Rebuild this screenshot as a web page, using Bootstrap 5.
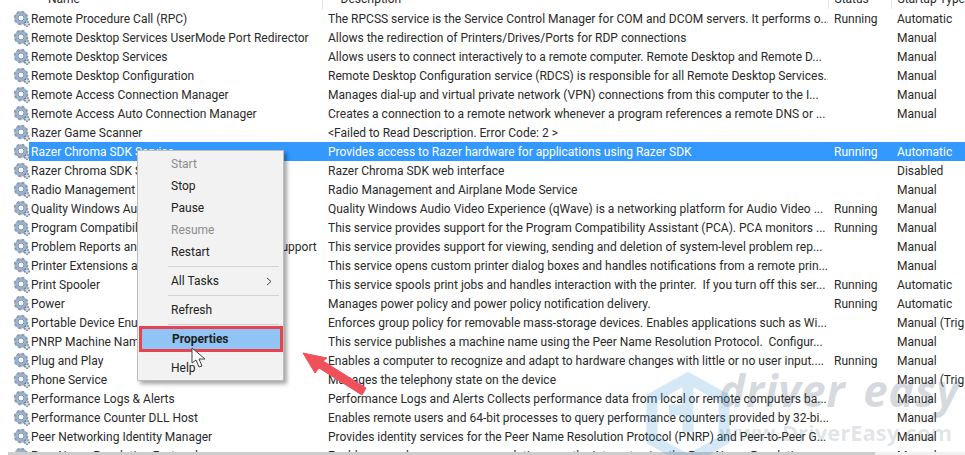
<!DOCTYPE html>
<html lang="en">
  <head>
    <meta charset="UTF-8">
    <meta name="viewport" content="width=device-width, initial-scale=1.0">
    <title>Services</title>
    <link href="https://cdn.jsdelivr.net/npm/bootstrap@5.3.0/dist/css/bootstrap.min.css" rel="stylesheet">
    <style>
      html, body {
        height: 455px;
        overflow: hidden;
        background: #fff;
      }
      body {
        position: relative;
        font-family: Roboto, "Noto Sans", sans-serif;
        font-size: 12px;
        color: #2a2a2a;
      }
      .svc-wrap {
        height: 452px;
        overflow: hidden;
      }
      .svc-table {
        table-layout: fixed;
        width: 965px;
        margin-top: -11px;
        --bs-table-color: #2a2a2a;
      }
      .svc-table th, .svc-table td {
        height: 19px;
        padding: 0 0 0 6px;
        line-height: 18px;
        font-size: 12px;
        font-weight: 400;
        white-space: pre;
        overflow: hidden;
        vertical-align: middle;
      }
      .svc-table th {
        height: 20px;
        border-right: 1px solid #e5e5e5;
      }
      .svc-table th:last-child { border-right: 0; }
      .svc-table th:nth-child(2) { padding-left: 18px; }
      .svc-table td.svc-name {
        padding-left: 13px;
      }
      .svc-name-in {
        display: flex;
        align-items: center;
        height: 19px;
      }
      .svc-name-in svg {
        flex: none;
        width: 18px;
        height: 18px;
      }
      .svc-on td {
        --bs-table-bg: transparent;
        background: #3399ff;
        color: #fff;
      }
      .svc-on td.svc-name {
        background: linear-gradient(90deg, #fff 29px, #3399ff 29px);
      }
      .svc-scroll {
        height: 3px;
        background: linear-gradient(90deg, #fff 8px, #cdcdcd 8px, #cdcdcd 875px, #f0f0f0 875px);
      }
      .svc-menu {
        position: absolute;
        left: 137px;
        top: 150px;
        width: 147px;
        height: 231px;
        min-width: 0;
        padding: 2px 0 0;
        background: #f2f2f2;
        border: 1px solid #bdbdbd;
        border-radius: 0;
        box-shadow: 3px 3px 4px rgba(0, 0, 0, .35);
        font-size: 12px;
      }
      .svc-menu .dropdown-item {
        height: 22px;
        line-height: 23px;
        padding: 0 0 0 33px;
        position: relative;
        color: #222;
      }
      .svc-menu .dropdown-item.disabled { color: #8c8c8c; }
      .svc-menu .dropdown-divider {
        margin: 3px 4px 3px 30px;
        border-color: #d2d2d2;
        opacity: 1;
      }
      .svc-menu .svc-tail {
        position: absolute;
        right: 11px;
        top: 7px;
      }
      .svc-menu .svc-pick {
        width: 144px;
        height: 26px;
        margin: -2px 0 5px 1px;
        padding-left: 30px;
        line-height: 20px;
        background: #90c4f5;
        border: 3px solid #e8434f;
        font-weight: 700;
        color: #222;
      }
      .svc-over {
        position: absolute;
        pointer-events: none;
      }
      .svc-arrow { left: 295px; top: 345px; }
      .svc-cursor { left: 190px; top: 346px; z-index: 1001; }
      .svc-logo { left: 645px; top: 372px; opacity: .2; }
      .svc-mark {
        left: 719px;
        top: 362px;
        font-family: "Open Sans", sans-serif;
        font-style: italic;
        font-weight: 700;
        font-size: 44px;
        line-height: 56px;
        letter-spacing: .5px;
        word-spacing: 6px;
        white-space: pre;
        color: rgba(70, 90, 110, .22);
      }
      .svc-url {
        left: 719px;
        top: 419px;
        font-family: "Open Sans", sans-serif;
        font-weight: 700;
        font-size: 22px;
        line-height: 26px;
        white-space: pre;
        color: rgba(70, 90, 110, .16);
      }
    </style>
  </head>
  <body>
    <svg width="0" height="0" class="d-block">
      <defs>
        <symbol id="gear" viewBox="0 0 18 18">
          <circle cx="8" cy="8" r="5" fill="none" stroke="#9db1ca" stroke-width="3.4"/>
          <circle cx="8" cy="8" r="6.3" fill="none" stroke="#8b9bb0" stroke-width="2" stroke-dasharray="2.4 2.55"/>
          <circle cx="8" cy="8" r="3" fill="#f4f8fc" stroke="#5f7896" stroke-width=".8"/>
          <circle cx="14" cy="14" r="2.2" fill="#d5dde7" stroke="#66788f" stroke-width="1.4" stroke-dasharray="1.4 1"/>
        </symbol>
      </defs>
    </svg>

    <div class="svc-wrap">
      <table class="table table-borderless mb-0 svc-table">
        <colgroup>
          <col style="width: 322px">
          <col style="width: 506px">
          <col style="width: 63px">
          <col style="width: 74px">
        </colgroup>
        <thead>
          <tr><th class="ps-5">Name</th><th>Description</th><th>Status</th><th>Startup Type</th></tr>
        </thead>
        <tbody>
          <tr><td class="svc-name"><div class="svc-name-in"><svg><use href="#gear"/></svg><span>Remote Procedure Call (RPC)</span></div></td><td>The RPCSS service is the Service Control Manager for COM and DCOM servers. It performs o...</td><td>Running</td><td>Automatic</td></tr>
          <tr><td class="svc-name"><div class="svc-name-in"><svg><use href="#gear"/></svg><span>Remote Desktop Services UserMode Port Redirector</span></div></td><td>Allows the redirection of Printers/Drives/Ports for RDP connections</td><td></td><td>Manual</td></tr>
          <tr><td class="svc-name"><div class="svc-name-in"><svg><use href="#gear"/></svg><span>Remote Desktop Services</span></div></td><td>Allows users to connect interactively to a remote computer. Remote Desktop and Remote D...</td><td></td><td>Manual</td></tr>
          <tr><td class="svc-name"><div class="svc-name-in"><svg><use href="#gear"/></svg><span>Remote Desktop Configuration</span></div></td><td>Remote Desktop Configuration service (RDCS) is responsible for all Remote Desktop Services...</td><td></td><td>Manual</td></tr>
          <tr><td class="svc-name"><div class="svc-name-in"><svg><use href="#gear"/></svg><span>Remote Access Connection Manager</span></div></td><td>Manages dial-up and virtual private network (VPN) connections from this computer to the I...</td><td></td><td>Manual</td></tr>
          <tr><td class="svc-name"><div class="svc-name-in"><svg><use href="#gear"/></svg><span>Remote Access Auto Connection Manager</span></div></td><td>Creates a connection to a remote network whenever a program references a remote DNS or ...</td><td></td><td>Manual</td></tr>
          <tr><td class="svc-name"><div class="svc-name-in"><svg><use href="#gear"/></svg><span>Razer Game Scanner</span></div></td><td>&lt;Failed to Read Description. Error Code: 2 &gt;</td><td></td><td></td></tr>
          <tr class="svc-on"><td class="svc-name"><div class="svc-name-in"><svg><use href="#gear"/></svg><span>Razer Chroma SDK Service</span></div></td><td>Provides access to Razer hardware for applications using Razer SDK</td><td>Running</td><td>Automatic</td></tr>
          <tr><td class="svc-name"><div class="svc-name-in"><svg><use href="#gear"/></svg><span>Razer Chroma SDK Server</span></div></td><td>Razer Chroma SDK web interface</td><td></td><td>Disabled</td></tr>
          <tr><td class="svc-name"><div class="svc-name-in"><svg><use href="#gear"/></svg><span>Radio Management Service</span></div></td><td>Radio Management and Airplane Mode Service</td><td></td><td>Manual</td></tr>
          <tr><td class="svc-name"><div class="svc-name-in"><svg><use href="#gear"/></svg><span>Quality Windows Audio Video Experience</span></div></td><td>Quality Windows Audio Video Experience (qWave) is a networking platform for Audio Video ...</td><td>Running</td><td>Manual</td></tr>
          <tr><td class="svc-name"><div class="svc-name-in"><svg><use href="#gear"/></svg><span>Program Compatibility Assistant Service</span></div></td><td>This service provides support for the Program Compatibility Assistant (PCA). PCA monitors ...</td><td>Running</td><td>Manual</td></tr>
          <tr><td class="svc-name"><div class="svc-name-in"><svg><use href="#gear"/></svg><span>Problem Reports and Solutions Control Panel Support</span></div></td><td>This service provides support for viewing, sending and deletion of system-level problem rep...</td><td></td><td>Manual</td></tr>
          <tr><td class="svc-name"><div class="svc-name-in"><svg><use href="#gear"/></svg><span>Printer Extensions and Notifications</span></div></td><td>This service opens custom printer dialog boxes and handles notifications from a remote prin...</td><td></td><td>Manual</td></tr>
          <tr><td class="svc-name"><div class="svc-name-in"><svg><use href="#gear"/></svg><span>Print Spooler</span></div></td><td>This service spools print jobs and handles interaction with the printer.  If you turn off this ser...</td><td>Running</td><td>Automatic</td></tr>
          <tr><td class="svc-name"><div class="svc-name-in"><svg><use href="#gear"/></svg><span>Power</span></div></td><td>Manages power policy and power policy notification delivery.</td><td>Running</td><td>Automatic</td></tr>
          <tr><td class="svc-name"><div class="svc-name-in"><svg><use href="#gear"/></svg><span>Portable Device Enumerator Service</span></div></td><td>Enforces group policy for removable mass-storage devices. Enables applications such as Wi...</td><td></td><td>Manual (Trig</td></tr>
          <tr><td class="svc-name"><div class="svc-name-in"><svg><use href="#gear"/></svg><span>PNRP Machine Name Publication Service</span></div></td><td>This service publishes a machine name using the Peer Name Resolution Protocol.  Configur...</td><td></td><td>Manual</td></tr>
          <tr><td class="svc-name"><div class="svc-name-in"><svg><use href="#gear"/></svg><span>Plug and Play</span></div></td><td>Enables a computer to recognize and adapt to hardware changes with little or no user input....</td><td>Running</td><td>Manual</td></tr>
          <tr><td class="svc-name"><div class="svc-name-in"><svg><use href="#gear"/></svg><span>Phone Service</span></div></td><td>Manages the telephony state on the device</td><td></td><td>Manual (Trig</td></tr>
          <tr><td class="svc-name"><div class="svc-name-in"><svg><use href="#gear"/></svg><span>Performance Logs &amp; Alerts</span></div></td><td>Performance Logs and Alerts Collects performance data from local or remote computers ba...</td><td></td><td>Manual</td></tr>
          <tr><td class="svc-name"><div class="svc-name-in"><svg><use href="#gear"/></svg><span>Performance Counter DLL Host</span></div></td><td>Enables remote users and 64-bit processes to query performance counters provided by 32-bi...</td><td></td><td>Manual</td></tr>
          <tr><td class="svc-name"><div class="svc-name-in"><svg><use href="#gear"/></svg><span>Peer Networking Identity Manager</span></div></td><td>Provides identity services for the Peer Name Resolution Protocol (PNRP) and Peer-to-Peer G...</td><td></td><td>Manual</td></tr>
          <tr><td class="svc-name"><div class="svc-name-in"><svg><use href="#gear"/></svg><span>Peer Name Resolution Protocol</span></div></td><td>Enables serverless peer name resolution over the Internet using the Peer Name Resolution...</td><td></td><td>Manual</td></tr>
        </tbody>
      </table>
    </div>
    <div class="svc-scroll"></div>

    <div class="dropdown-menu show svc-menu">
      <a class="dropdown-item disabled" href="#">Start</a>
      <a class="dropdown-item" href="#">Stop</a>
      <a class="dropdown-item" href="#">Pause</a>
      <a class="dropdown-item disabled" href="#">Resume</a>
      <a class="dropdown-item" href="#">Restart</a>
      <hr class="dropdown-divider">
      <a class="dropdown-item" href="#">All Tasks
        <svg class="svc-tail" width="6" height="9" viewBox="0 0 6 9"><path d="M1 1l4 3.5L1 8" fill="none" stroke="#444" stroke-width="1"/></svg>
      </a>
      <hr class="dropdown-divider">
      <a class="dropdown-item" href="#">Refresh</a>
      <hr class="dropdown-divider">
      <a class="dropdown-item svc-pick" href="#">Properties</a>
      <a class="dropdown-item" href="#">Help</a>
    </div>

    <svg class="svc-over svc-arrow" width="80" height="55" viewBox="295 345 80 55">
      <path d="M303 353L327 358 323 361 366 388 362 395 319 368 315 373Z" fill="#f0505a" stroke="#f0505a" stroke-linejoin="round"/>
    </svg>
    <svg class="svc-over svc-cursor" width="20" height="24" viewBox="0 0 20 24">
      <path d="M2 2L2 17 6 14 9 21 12 20 9 13 15 13Z" fill="#fff" stroke="#444" stroke-width="1"/>
    </svg>
    <svg class="svc-over svc-logo" width="86" height="83" viewBox="0 0 86 83">
      <path d="M43 6L79 26 79 68 43 88 7 68 7 26Z" fill="none" stroke="#2f8fd0" stroke-width="11"/>
      <path d="M43 6V60M24 38H43" fill="none" stroke="#2f8fd0" stroke-width="11"/>
    </svg>
    <div class="svc-over svc-mark">driver easy</div>
    <div class="svc-over svc-url">www.DriverEasy.com</div>
  </body>
</html>
